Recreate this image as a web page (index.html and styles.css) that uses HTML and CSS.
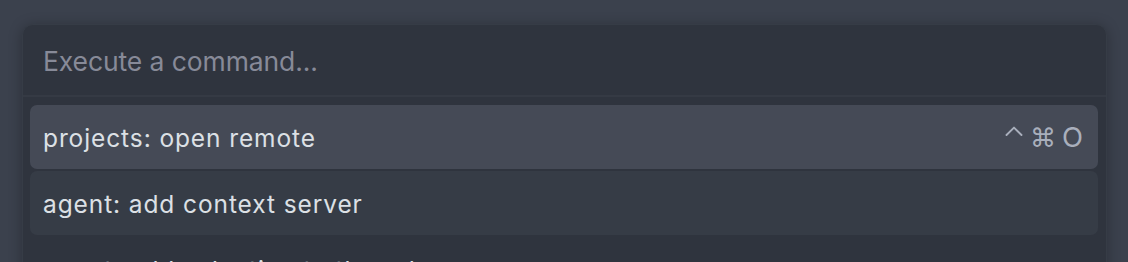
FILE: index.html
```html
<!DOCTYPE html>
<html>
<head>
<meta charset="utf-8">
<link rel="stylesheet" href="styles.css">
</head>
<body>
<div class="stage">
  <div class="palette">
    <div class="query">
      <span class="placeholder">Execute a command...</span>
    </div>
    <div class="list">
      <div class="item selected">
        <span class="label">projects: open remote</span>
        <span class="keys">
          <svg class="ctrl" width="18" height="10" viewBox="0 0 18 10"><polyline points="1.5,9 9,1.6 16.5,9" fill="none" stroke="#a9afbc" stroke-width="1.9" stroke-linecap="round" stroke-linejoin="round"/></svg>
          <span class="key cmd">⌘</span>
          <span class="key letter">O</span>
        </span>
      </div>
      <div class="item hovered">
        <span class="label">agent: add context server</span>
      </div>
      <div class="item">
        <span class="label">agent: add selection to thread</span>
      </div>
    </div>
  </div>
</div>
</body>
</html>
```

FILE: styles.css
```css
html, body {
  margin: 0;
  padding: 0;
  height: 100%;
  overflow: hidden;
  background: #3b414d;
}

.stage {
  padding: 24px 21px 0 22px;
}

.palette {
  background: #2f343e;
  border: 1px solid #363c46;
  border-radius: 11px;
  box-shadow: 0 2px 14px rgba(0, 0, 0, 0.28);
  height: 400px;
  font-family: Inter, "Noto Sans", sans-serif;
}

.query {
  height: 70px;
  display: flex;
  align-items: center;
  padding-left: 20px;
  border-bottom: 2px solid #353a44;
}

.placeholder {
  color: #878a98;
  font-size: 26.5px;
  letter-spacing: -0.1px;
  padding-top: 1px;
}

.list {
  padding: 8px 8px 0 7px;
  display: flex;
  flex-direction: column;
  gap: 2px;
}

.item {
  height: 64px;
  border-radius: 7px;
  display: flex;
  align-items: center;
  justify-content: space-between;
  padding: 2px 15px 0 13px;
  box-sizing: border-box;
  color: #dce0e5;
  font-size: 24.5px;
  letter-spacing: 0.9px;
}

.item.selected {
  background: #454a56;
}

.item.hovered {
  background: #363c46;
}

.keys {
  display: flex;
  align-items: center;
  gap: 6px;
  color: #a9afbc;
  letter-spacing: 0;
}

.ctrl {
  margin-bottom: 14px;
  margin-right: 1px;
}

.key.cmd {
  font-family: "DejaVu Sans", sans-serif;
  font-size: 26px;
  line-height: 1;
}

.key.letter {
  font-family: Inter, sans-serif;
  font-size: 27.5px;
  line-height: 1;
}
```
